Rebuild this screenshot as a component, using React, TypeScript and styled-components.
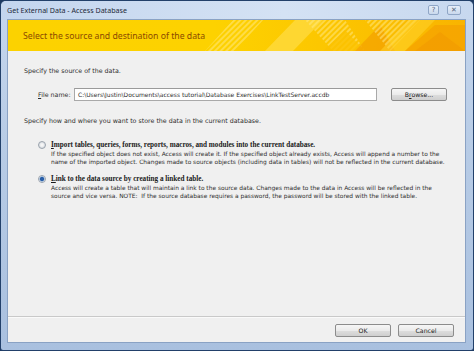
import React from "react";
import styled, { createGlobalStyle } from "styled-components";

const Global = createGlobalStyle`
  html, body { margin: 0; padding: 0; background: #1d3a62; }
  #root { width: 474px; height: 351px; }
`;

const Window = styled.div`
  width: 474px;
  height: 351px;
  box-sizing: border-box;
  border: 1px solid #22406a;
  border-radius: 6px 6px 3px 3px;
  background: linear-gradient(180deg, #c6d7ee 0%, #b8cce6 40%, #a9c0df 100%);
  display: flex;
  flex-direction: column;
  overflow: hidden;
`;

const TitleBar = styled.div`
  height: 18px;
  display: flex;
  align-items: center;
  padding: 0 12px 0 6px;
  background: linear-gradient(90deg, #c3d5ee 0%, #d4e2f4 60%, #c7d8ef 100%);
`;

const TitleText = styled.span`
  flex: 1;
  font-family: "Noto Sans", "DejaVu Sans", sans-serif;
  font-size: 7.1px;
  color: #1e2a3a;
`;

const CaptionButton = styled.div<{ $w: number }>`
  width: ${(p) => p.$w}px;
  height: 10px;
  margin-left: 8px;
  box-sizing: border-box;
  border: 1px solid #8fa6c6;
  border-radius: 2px;
  background: linear-gradient(180deg, #e6eef9, #c9d8ec);
  display: flex;
  align-items: center;
  justify-content: center;
  font-family: "DejaVu Sans", sans-serif;
  font-size: 7px;
  line-height: 1;
  color: #55657a;
`;

const Client = styled.div`
  flex: 1;
  margin: 0 7px 7px 6px;
  border: 1px solid #8aa2c4;
  background: #f0f0f0;
  display: flex;
  flex-direction: column;
`;

const Banner = styled.div`
  position: relative;
  height: 31px;
  background: linear-gradient(90deg, #fcd200 0%, #fdd200 45%, #fcc600 70%, #f9b400 100%);
  display: flex;
  align-items: center;
  padding-left: 15px;
  overflow: hidden;
`;

const BannerArt = styled.svg`
  position: absolute;
  right: 0;
  top: 0;
`;

const BannerTitle = styled.span`
  position: relative;
  font-family: "Noto Sans", "DejaVu Sans", sans-serif;
  font-size: 8.7px;
  color: #8a4a00;
`;

const Body = styled.div`
  flex: 1;
  padding: 16px 0 0 16px;
  font-family: "DejaVu Sans", sans-serif;
  font-size: 6.3px;
  color: #2e2e2e;
  display: flex;
  flex-direction: column;
`;

const Line = styled.div<{ $mt?: number }>`
  margin-top: ${(p) => p.$mt ?? 0}px;
  line-height: 8px;
  white-space: nowrap;
`;

const FileRow = styled.div`
  display: flex;
  align-items: center;
  margin-top: 13px;
  padding-left: 14px;
`;

const Label = styled.span`
  width: 36px;
  white-space: nowrap;
`;

const Input = styled.div`
  width: 303px;
  height: 13px;
  box-sizing: border-box;
  border: 1px solid #a9a9a9;
  border-top-color: #9a9a9a;
  background: #fff;
  padding-left: 3px;
  display: flex;
  align-items: center;
  white-space: nowrap;
  overflow: hidden;
  font-size: 6px;
`;

const Button = styled.div<{ $w: number }>`
  width: ${(p) => p.$w}px;
  height: 13px;
  box-sizing: border-box;
  border: 1px solid #8c8c8c;
  border-radius: 2px;
  background: linear-gradient(180deg, #f6f6f6 0%, #ebebeb 50%, #dddddd 51%, #cfcfcf 100%);
  display: flex;
  align-items: center;
  justify-content: center;
  font-family: "DejaVu Sans", sans-serif;
  font-size: 6.2px;
  color: #222;
`;

const BrowseWrap = styled.div`
  margin-left: 14px;
`;

const Option = styled.div<{ $mt: number }>`
  margin-top: ${(p) => p.$mt}px;
  padding-left: 14px;
`;

const OptionHead = styled.div`
  display: flex;
  align-items: center;
  height: 9px;
`;

const Radio = styled.span<{ $on?: boolean }>`
  width: 8px;
  height: 8px;
  box-sizing: border-box;
  border-radius: 50%;
  border: 1px solid #9aa3ad;
  background: ${(p) =>
    p.$on
      ? "radial-gradient(circle, #2a5fa8 0 1.8px, #8fb1d9 2.3px, #eef3f9 3px)"
      : "radial-gradient(circle, #f6f6f6 0 1px, #d9dde2 3px)"};
  margin-right: 5px;
`;

const OptionTitle = styled.span`
  font-family: "Liberation Serif", "DejaVu Serif", serif;
  font-weight: bold;
  font-size: 7.2px;
  color: #1a1a1a;
  white-space: nowrap;
`;

const OptionDesc = styled.div`
  padding-left: 13px;
  margin-top: 1px;
  font-size: 5.9px;
`;

const Footer = styled.div`
  height: 24px;
  border-top: 1px solid #c9c9c9;
  box-shadow: inset 0 1px 0 #fafafa;
  display: flex;
  align-items: center;
  justify-content: flex-end;
  gap: 7px;
  padding-right: 11px;
  padding-top: 1px;
`;

export default function App() {
  return (
    <>
      <Global />
      <Window>
        <TitleBar>
          <TitleText>Get External Data - Access Database</TitleText>
          <CaptionButton $w={11}>?</CaptionButton>
          <CaptionButton $w={14}>✕</CaptionButton>
        </TitleBar>
        <Client>
          <Banner>
            <BannerArt width="260" height="31" viewBox="0 0 260 31">
              <defs>
                <pattern id="st" width="4" height="4" patternUnits="userSpaceOnUse" patternTransform="rotate(45)">
                  <rect width="2" height="4" fill="#ffe680" opacity="0.55" />
                </pattern>
              </defs>
              <polygon points="0,31 28,0 58,0 30,31" fill="url(#st)" />
              <polygon points="60,31 90,0 118,0 88,31" fill="#ffe25a" opacity="0.55" />
              <polygon points="100,0 140,0 160,31 128,31" fill="url(#st)" />
              <polygon points="118,31 140,10 160,31" fill="#fbc200" opacity="0.8" />
              <polygon points="150,31 175,5 190,31" fill="#f5a400" opacity="0.8" />
              <polygon points="160,0 215,0 185,31" fill="url(#st)" />
              <polygon points="175,31 205,0 230,0 200,31" fill="#ffd530" opacity="0.5" />
              <polygon points="200,31 230,5 260,5 260,31" fill="#f6a500" opacity="0.85" />
              <polygon points="210,31 235,12 260,31" fill="#f29a00" opacity="0.6" />
            </BannerArt>
            <BannerTitle>Select the source and destination of the data</BannerTitle>
          </Banner>
          <Body>
            <Line>Specify the source of the data.</Line>
            <FileRow>
              <Label>
                <u>F</u>ile name:
              </Label>
              <Input>C:\Users\Justin\Documents\access tutorial\Database Exercises\LinkTestServer.accdb</Input>
              <BrowseWrap>
                <Button $w={56}>
                  B<u>r</u>owse...
                </Button>
              </BrowseWrap>
            </FileRow>
            <Line $mt={16}>Specify how and where you want to store the data in the current database.</Line>
            <Option $mt={15}>
              <OptionHead>
                <Radio />
                <OptionTitle>
                  <u>I</u>mport tables, queries, forms, reports, macros, and modules into the current database.
                </OptionTitle>
              </OptionHead>
              <OptionDesc>
                <Line>
                  If the specified object does not exist, Access will create it. If the specified object already exists, Access will append a number to the
                </Line>
                <Line>
                  name of the imported object. Changes made to source objects (including data in tables) will not be reflected in the current database.
                </Line>
              </OptionDesc>
            </Option>
            <Option $mt={8}>
              <OptionHead>
                <Radio $on />
                <OptionTitle>
                  <u>L</u>ink to the data source by creating a linked table.
                </OptionTitle>
              </OptionHead>
              <OptionDesc>
                <Line>
                  Access will create a table that will maintain a link to the source data. Changes made to the data in Access will be reflected in the
                </Line>
                <Line>
                  source and vice versa. NOTE:&nbsp; If the source database requires a password, the password will be stored with the linked table.
                </Line>
              </OptionDesc>
            </Option>
          </Body>
          <Footer>
            <Button $w={56}>OK</Button>
            <Button $w={56}>Cancel</Button>
          </Footer>
        </Client>
      </Window>
    </>
  );
}
